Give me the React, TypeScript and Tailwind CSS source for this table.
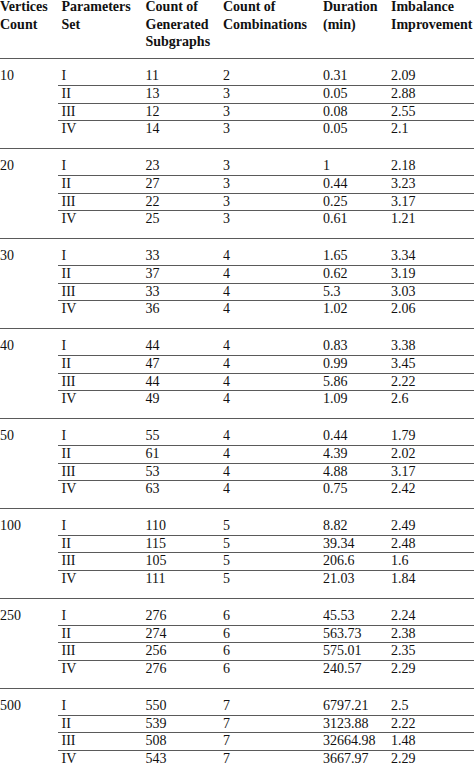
const groups: { vertices: string; rows: string[][] }[] = [
  {
    vertices: "10",
    rows: [
      ["I", "11", "2", "0.31", "2.09"],
      ["II", "13", "3", "0.05", "2.88"],
      ["III", "12", "3", "0.08", "2.55"],
      ["IV", "14", "3", "0.05", "2.1"],
    ],
  },
  {
    vertices: "20",
    rows: [
      ["I", "23", "3", "1", "2.18"],
      ["II", "27", "3", "0.44", "3.23"],
      ["III", "22", "3", "0.25", "3.17"],
      ["IV", "25", "3", "0.61", "1.21"],
    ],
  },
  {
    vertices: "30",
    rows: [
      ["I", "33", "4", "1.65", "3.34"],
      ["II", "37", "4", "0.62", "3.19"],
      ["III", "33", "4", "5.3", "3.03"],
      ["IV", "36", "4", "1.02", "2.06"],
    ],
  },
  {
    vertices: "40",
    rows: [
      ["I", "44", "4", "0.83", "3.38"],
      ["II", "47", "4", "0.99", "3.45"],
      ["III", "44", "4", "5.86", "2.22"],
      ["IV", "49", "4", "1.09", "2.6"],
    ],
  },
  {
    vertices: "50",
    rows: [
      ["I", "55", "4", "0.44", "1.79"],
      ["II", "61", "4", "4.39", "2.02"],
      ["III", "53", "4", "4.88", "3.17"],
      ["IV", "63", "4", "0.75", "2.42"],
    ],
  },
  {
    vertices: "100",
    rows: [
      ["I", "110", "5", "8.82", "2.49"],
      ["II", "115", "5", "39.34", "2.48"],
      ["III", "105", "5", "206.6", "1.6"],
      ["IV", "111", "5", "21.03", "1.84"],
    ],
  },
  {
    vertices: "250",
    rows: [
      ["I", "276", "6", "45.53", "2.24"],
      ["II", "274", "6", "563.73", "2.38"],
      ["III", "256", "6", "575.01", "2.35"],
      ["IV", "276", "6", "240.57", "2.29"],
    ],
  },
  {
    vertices: "500",
    rows: [
      ["I", "550", "7", "6797.21", "2.5"],
      ["II", "539", "7", "3123.88", "2.22"],
      ["III", "508", "7", "32664.98", "1.48"],
      ["IV", "543", "7", "3667.97", "2.29"],
    ],
  },
];

const cols = "grid grid-cols-[84px_77.5px_100px_68px_86.5px]";

export default function App() {
  return (
    <div className="w-[474px] bg-white font-['Liberation_Serif',serif] text-[14px] text-[#111] overflow-hidden">
      {/* Header */}
      <div className="h-[60px]">
        <div className="flex -mt-[2px] font-bold leading-[17.5px]">
          <div className="w-[58px]">
            Vertices
            <br />
            Count
          </div>
          <div className={cols}>
            <div className="pl-[3.5px]">
              Parameters
              <br />
              Set
            </div>
            <div className="pl-[3.5px]">
              Count of
              <br />
              Generated
              <br />
              Subgraphs
            </div>
            <div className="pl-[3.5px]">
              Count of
              <br />
              Combinations
            </div>
            <div className="pl-[3.5px]">
              Duration
              <br />
              (min)
            </div>
            <div className="pl-[3.5px] whitespace-nowrap">
              Imbalance
              <br />
              Improvement
            </div>
          </div>
        </div>
      </div>

      {/* Groups */}
      {groups.map((g) => (
        <div
          key={g.vertices}
          className="flex border-t border-[#5a5a5a] pb-[9.9px] leading-[16.7px]"
        >
          <div className="w-[58px] pt-[9.3px]">{g.vertices}</div>
          <div className="flex-1">
            {g.rows.map((r, i) => (
              <div
                key={r[0]}
                className={
                  i === 0
                    ? `${cols} pt-[9.3px]`
                    : `${cols} h-[17.7px] border-t border-[#5a5a5a]`
                }
              >
                {r.map((c, j) => (
                  <div key={j} className="pl-[3.5px] whitespace-nowrap">
                    {c}
                  </div>
                ))}
              </div>
            ))}
          </div>
        </div>
      ))}
    </div>
  );
}
